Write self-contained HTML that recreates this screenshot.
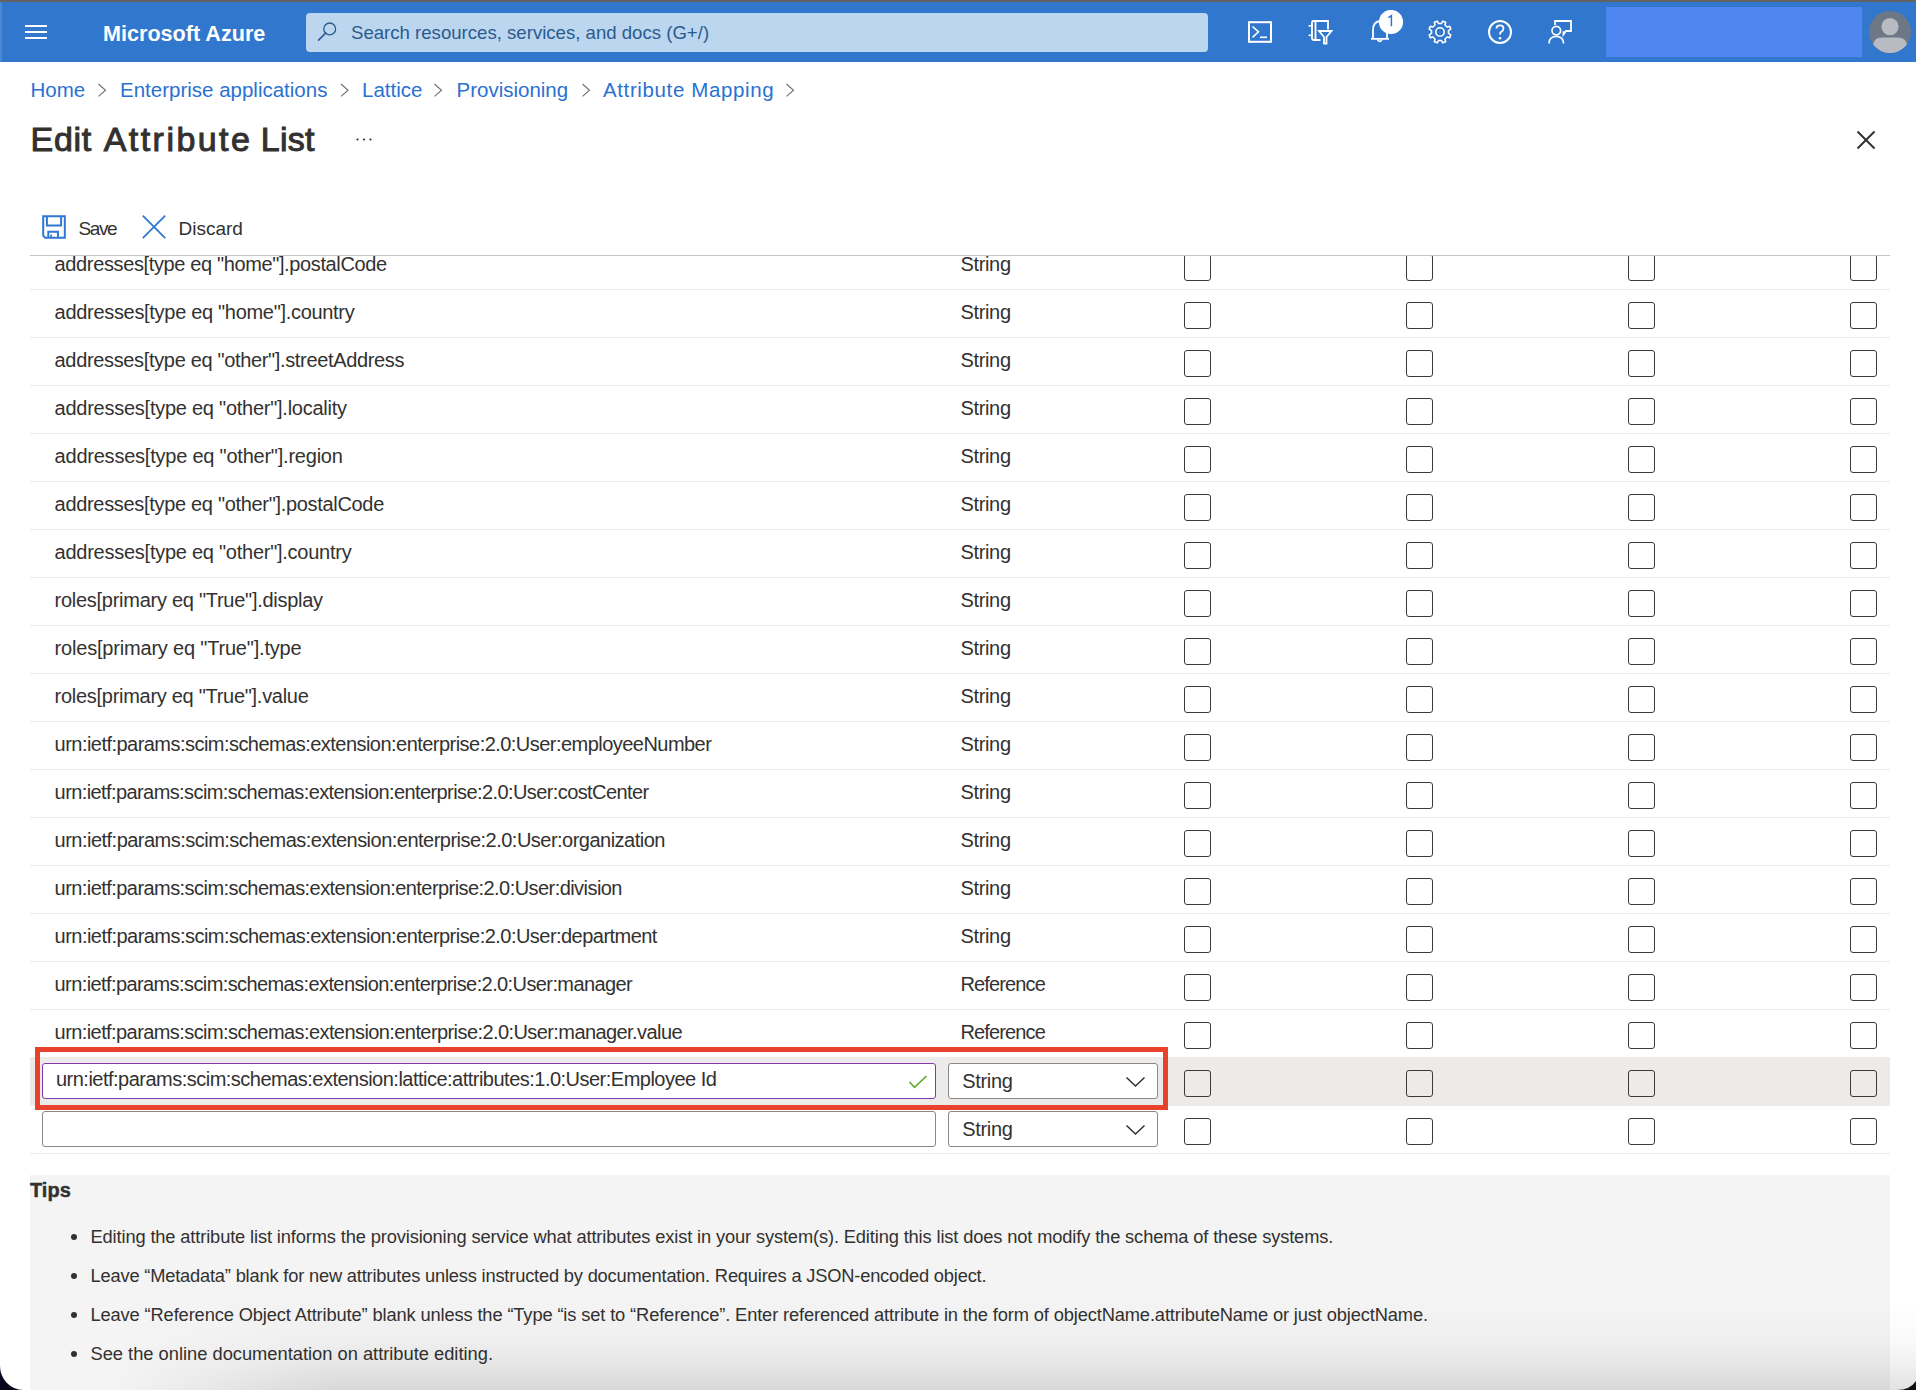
<!DOCTYPE html>
<html><head><meta charset="utf-8">
<style>
*{box-sizing:border-box;margin:0;padding:0}
html,body{width:1916px;height:1390px;overflow:hidden;background:#fff;font-family:"Liberation Sans",sans-serif;color:#323130}
.abs{position:absolute}
#strip{left:0;top:0;width:1916px;height:2px;background:#626262}
#hdr{left:0;top:2px;width:1916px;height:60px;background:#3277ce}
#hdrl{left:0;top:2px;width:2px;height:60px;background:#4b86d2}
.ham{left:25px;width:22px;height:1.6px;background:#fff}
#brand{left:103px;top:19.8px;font-size:21.6px;font-weight:bold;color:#fff;white-space:nowrap;line-height:28px}
#search{left:306px;top:13px;width:902px;height:39px;background:#bcd6ef;border-radius:4px}
#stext{left:351px;top:19.8px;font-size:18.6px;color:#2b5a8f;white-space:nowrap;line-height:26px}
#redact{left:1606px;top:7px;width:256px;height:50px;background:#4f86f0}
.bc{top:78px;font-size:20.5px;color:#2b71d1;white-space:nowrap;line-height:24px}
.chev{top:83px}
.ttl{top:118.2px;font-size:34px;font-weight:normal;-webkit-text-stroke:1px #323130;white-space:nowrap;line-height:42px;color:#323130}
.tb{top:219px;font-size:19px;white-space:nowrap;line-height:20px;color:#323130}
#scroll{left:0;top:256px;width:1916px;height:898px;overflow:hidden}
#topb{left:30px;top:255px;width:1860px;height:1px;background:#c8c6c4}
.row{position:absolute;left:30px;width:1860px;height:48px;border-bottom:1px solid #edebe9}
.row .n{position:absolute;left:24.6px;top:11.6px;font-size:20px;white-space:nowrap;line-height:20px}
.row .t{position:absolute;left:930.4px;top:11.6px;font-size:20px;white-space:nowrap;line-height:20px}
.cb{position:absolute;top:12px;width:27px;height:27px;border:1.4px solid #3b3a39;border-radius:3px}
.c1{left:1154px}.c2{left:1376px}.c3{left:1598px}.c4{left:1820px}
.inp{position:absolute;left:12.4px;top:5px;width:893.4px;height:36px;border:1px solid #8a8886;border-radius:3px;background:#fff}
.dd{position:absolute;left:918.2px;top:5px;width:209.5px;height:36px;border:1px solid #8a8886;border-radius:3px;background:#fff}
.dd span{position:absolute;left:13px;top:6.6px;font-size:20px;line-height:20px}
.dd svg{position:absolute;left:176px;top:12px}
.it{position:absolute;left:12.6px;top:5.2px;font-size:20px;line-height:20px;white-space:nowrap}
.chk{position:absolute;left:865px;top:10.5px}
#redbox{left:35px;top:1047px;width:1133px;height:63px;border:5px solid #e8412c}
#tips{left:30px;top:1175px;width:1860px;height:215px;background:#f4f4f4}
#tipsh{left:30px;top:1179.3px;font-size:20px;font-weight:bold;line-height:22px;-webkit-text-stroke:0.4px #323130}
.li{left:90.5px;font-size:18.3px;white-space:nowrap;line-height:20px}
.dot{left:70.8px;width:6px;height:6px;border-radius:50%;background:#323130}
#shade{left:0;top:1300px;width:1916px;height:90px;background:linear-gradient(to bottom,rgba(0,0,0,0) 0%,rgba(0,0,0,0.02) 45%,rgba(0,0,0,0.06) 72%,rgba(0,0,0,0.115) 100%);-webkit-mask-image:linear-gradient(to right,transparent 110px,#000 340px);mask-image:linear-gradient(to right,transparent 110px,#000 340px)}
</style></head><body>
<div id="strip" class="abs"></div>
<div id="hdr" class="abs"></div>
<div id="hdrl" class="abs"></div>
<div class="abs ham" style="top:25.2px"></div>
<div class="abs ham" style="top:31.1px"></div>
<div class="abs ham" style="top:37.1px"></div>
<div id="brand" class="abs">Microsoft Azure</div>
<div id="search" class="abs"></div>
<svg class="abs" style="left:316px;top:21px" width="22" height="22" viewBox="0 0 22 22"><circle cx="13.7" cy="7.9" r="5.9" fill="none" stroke="#2b5a8f" stroke-width="1.3"/><line x1="9.6" y1="12.1" x2="2.6" y2="19.1" stroke="#2b5a8f" stroke-width="1.5" stroke-linecap="round"/></svg>
<div id="stext" class="abs">Search resources, services, and docs (G+/)</div>
<!-- header icons -->
<svg class="abs" style="left:1240px;top:10px" width="340" height="45" viewBox="1240 10 340 45">
 <g fill="none" stroke="#fff" stroke-width="2">
  <rect x="1249" y="22.2" width="22" height="19.6"/>
  <polyline points="1252.5,26.5 1258.5,31.8 1252.5,37.3" stroke-width="1.6"/>
  <line x1="1260" y1="37.3" x2="1267" y2="37.3" stroke-width="1.6"/>
  <path d="M1315.5 21 H1328 V29.5 M1320.5 40 H1315.5 M1315.5 21 V40 M1315.5 21 H1313.5 Q1312 21 1312 22.5 V38.5 Q1312 40 1313.5 40 H1315.5" stroke-width="1.8"/>
  <line x1="1308.5" y1="25.8" x2="1313" y2="25.8" stroke-width="1.6"/>
  <line x1="1308.5" y1="35.3" x2="1313" y2="35.3" stroke-width="1.6"/>
  <path d="M1319 31 H1331.5 L1326.5 37 V43.5 H1324 V37 Z" stroke-width="1.8"/>
  <path d="M1373 38 V30 Q1373 22 1380 21 M1387 33 V38 M1371 38.9 H1389" stroke-width="1.8"/>
  <path d="M1377.5 39.5 Q1379.8 43.5 1382 39.5" stroke-width="1.6"/>
  <circle cx="1500" cy="32" r="11" stroke-width="2"/>
  <path d="M1496.5 28.5 Q1496.5 25.3 1500 25.3 Q1503.5 25.3 1503.5 28.5 Q1503.5 30.5 1501 32 Q1500 32.8 1500 34.5" stroke-width="1.8"/>
  <path d="M1555 25 V21 H1571 V31 H1566 L1563.5 34.5 V31.2" stroke-width="1.8"/>
  <circle cx="1556.3" cy="30.6" r="4.3" stroke-width="1.7"/>
  <path d="M1549 43.5 Q1549 36.5 1556.3 36.5 Q1563.5 36.5 1563.5 43.5" stroke-width="1.7"/>
 </g>
 <circle cx="1500" cy="38.3" r="1.3" fill="#fff"/>
 <circle cx="1391" cy="22" r="12.1" fill="#fff"/>
 <path d="M1388.4 17.6 L1391.4 15.6 V26.2" fill="none" stroke="#3277ce" stroke-width="1.5"/>
 <g transform="translate(1440 32)">
  <path id="gear" fill="none" stroke="#fff" stroke-width="1.6" stroke-linejoin="round" d="M1.35 -8.49 L2.87 -10.83 L5.63 -9.68 L5.05 -6.96 L6.96 -5.05 L9.68 -5.63 L10.83 -2.87 L8.49 -1.35 L8.49 1.35 L10.83 2.87 L9.68 5.63 L6.96 5.05 L5.05 6.96 L5.63 9.68 L2.87 10.83 L1.35 8.49 L-1.35 8.49 L-2.87 10.83 L-5.63 9.68 L-5.05 6.96 L-6.96 5.05 L-9.68 5.63 L-10.83 2.87 L-8.49 1.35 L-8.49 -1.35 L-10.83 -2.87 L-9.68 -5.63 L-6.96 -5.05 L-5.05 -6.96 L-5.63 -9.68 L-2.87 -10.83 L-1.35 -8.49 Z"/>
  <circle r="4.2" fill="none" stroke="#fff" stroke-width="1.6"/>
 </g>
</svg>
<div id="redact" class="abs"></div>
<svg class="abs" style="left:1869px;top:11px" width="42" height="42" viewBox="0 0 42 42">
 <defs><clipPath id="av"><circle cx="21" cy="21" r="21"/></clipPath></defs>
 <circle cx="21" cy="21" r="21" fill="#6d7786"/>
 <g clip-path="url(#av)" fill="#b8bbc1">
  <circle cx="21" cy="15.6" r="8.6"/>
  <path d="M4 42 V36 Q4 26.6 13 26.6 H29 Q38 26.6 38 36 V42 Z"/>
 </g>
</svg>
<!-- breadcrumb -->
<div class="abs bc" style="left:30.5px">Home</div>
<div class="abs bc" style="left:120px">Enterprise applications</div>
<div class="abs bc" style="left:362px">Lattice</div>
<div class="abs bc" style="left:456.5px">Provisioning</div>
<div class="abs bc" style="left:603px;letter-spacing:0.62px">Attribute Mapping</div>
<svg class="abs" style="left:0;top:80px" width="820" height="20" viewBox="0 80 820 20"><g fill="none" stroke="#767472" stroke-width="1.2"><polyline points="98.5,84 105.5,90.2 98.5,96.4"/><polyline points="341,84 348,90.2 341,96.4"/><polyline points="434.5,84 441.5,90.2 434.5,96.4"/><polyline points="582.5,84 589.5,90.2 582.5,96.4"/><polyline points="786.5,84 793.5,90.2 786.5,96.4"/></g></svg>
<div id="t1" class="abs ttl" style="left:30.50px;letter-spacing:0.733px">Edit</div><div id="t2" class="abs ttl" style="left:103.70px;letter-spacing:2.450px">Attribute</div><div id="t3" class="abs ttl" style="left:260.80px;letter-spacing:0.267px">List</div>
<svg class="abs" style="left:350px;top:130px" width="30" height="20"><g fill="#323130"><circle cx="7.5" cy="9.5" r="1.1"/><circle cx="14" cy="9.5" r="1.1"/><circle cx="20.5" cy="9.5" r="1.1"/></g></svg>
<svg class="abs" style="left:1850px;top:124px" width="32" height="32" viewBox="0 0 32 32"><g stroke="#323130" stroke-width="1.9"><line x1="7.5" y1="7.5" x2="24.5" y2="24.5"/><line x1="24.5" y1="7.5" x2="7.5" y2="24.5"/></g></svg>
<!-- toolbar -->
<svg class="abs" style="left:40px;top:213px" width="130" height="28" viewBox="40 213 130 28">
 <g fill="none" stroke="#2f78d4" stroke-width="2">
  <path d="M43.2 216.2 H64.8 V237.7 H45.2 L43.2 235.7 Z"/>
  <path d="M46.9 216.2 V225.4 H61.1 V216.2"/>
  <path d="M48.3 237.7 V231.7 H58 V237.7"/>
  <path d="M51.1 237.7 V234.5" stroke-width="1.6"/>
 </g>
 <g stroke="#2f78d4" stroke-width="1.8"><line x1="142.8" y1="215.7" x2="165.2" y2="238.2"/><line x1="165.2" y1="215.7" x2="142.8" y2="238.2"/></g>
</svg>
<div class="abs tb" style="left:78.5px;letter-spacing:-1.4px">Save</div>
<div class="abs tb" style="left:178.5px">Discard</div>
<div id="topb" class="abs"></div>
<div id="scroll" class="abs">
 <div id="rows" class="abs" style="left:0;top:0;width:1916px;height:898px"><!--ROWS-->
<div class="row" style="top:-14px"><div class="n" style="letter-spacing:-0.371px">addresses[type eq &quot;home&quot;].postalCode</div><div class="t" style="letter-spacing:-0.320px">String</div><div class="cb c1"></div><div class="cb c2"></div><div class="cb c3"></div><div class="cb c4"></div></div>
<div class="row" style="top:34px"><div class="n" style="letter-spacing:-0.306px">addresses[type eq &quot;home&quot;].country</div><div class="t" style="letter-spacing:-0.320px">String</div><div class="cb c1"></div><div class="cb c2"></div><div class="cb c3"></div><div class="cb c4"></div></div>
<div class="row" style="top:82px"><div class="n" style="letter-spacing:-0.344px">addresses[type eq &quot;other&quot;].streetAddress</div><div class="t" style="letter-spacing:-0.320px">String</div><div class="cb c1"></div><div class="cb c2"></div><div class="cb c3"></div><div class="cb c4"></div></div>
<div class="row" style="top:130px"><div class="n" style="letter-spacing:-0.253px">addresses[type eq &quot;other&quot;].locality</div><div class="t" style="letter-spacing:-0.320px">String</div><div class="cb c1"></div><div class="cb c2"></div><div class="cb c3"></div><div class="cb c4"></div></div>
<div class="row" style="top:178px"><div class="n" style="letter-spacing:-0.225px">addresses[type eq &quot;other&quot;].region</div><div class="t" style="letter-spacing:-0.320px">String</div><div class="cb c1"></div><div class="cb c2"></div><div class="cb c3"></div><div class="cb c4"></div></div>
<div class="row" style="top:226px"><div class="n" style="letter-spacing:-0.317px">addresses[type eq &quot;other&quot;].postalCode</div><div class="t" style="letter-spacing:-0.320px">String</div><div class="cb c1"></div><div class="cb c2"></div><div class="cb c3"></div><div class="cb c4"></div></div>
<div class="row" style="top:274px"><div class="n" style="letter-spacing:-0.255px">addresses[type eq &quot;other&quot;].country</div><div class="t" style="letter-spacing:-0.320px">String</div><div class="cb c1"></div><div class="cb c2"></div><div class="cb c3"></div><div class="cb c4"></div></div>
<div class="row" style="top:322px"><div class="n" style="letter-spacing:-0.271px">roles[primary eq &quot;True&quot;].display</div><div class="t" style="letter-spacing:-0.320px">String</div><div class="cb c1"></div><div class="cb c2"></div><div class="cb c3"></div><div class="cb c4"></div></div>
<div class="row" style="top:370px"><div class="n" style="letter-spacing:-0.193px">roles[primary eq &quot;True&quot;].type</div><div class="t" style="letter-spacing:-0.320px">String</div><div class="cb c1"></div><div class="cb c2"></div><div class="cb c3"></div><div class="cb c4"></div></div>
<div class="row" style="top:418px"><div class="n" style="letter-spacing:-0.283px">roles[primary eq &quot;True&quot;].value</div><div class="t" style="letter-spacing:-0.320px">String</div><div class="cb c1"></div><div class="cb c2"></div><div class="cb c3"></div><div class="cb c4"></div></div>
<div class="row" style="top:466px"><div class="n" style="letter-spacing:-0.536px">urn:ietf:params:scim:schemas:extension:enterprise:2.0:User:employeeNumber</div><div class="t" style="letter-spacing:-0.320px">String</div><div class="cb c1"></div><div class="cb c2"></div><div class="cb c3"></div><div class="cb c4"></div></div>
<div class="row" style="top:514px"><div class="n" style="letter-spacing:-0.591px">urn:ietf:params:scim:schemas:extension:enterprise:2.0:User:costCenter</div><div class="t" style="letter-spacing:-0.320px">String</div><div class="cb c1"></div><div class="cb c2"></div><div class="cb c3"></div><div class="cb c4"></div></div>
<div class="row" style="top:562px"><div class="n" style="letter-spacing:-0.517px">urn:ietf:params:scim:schemas:extension:enterprise:2.0:User:organization</div><div class="t" style="letter-spacing:-0.320px">String</div><div class="cb c1"></div><div class="cb c2"></div><div class="cb c3"></div><div class="cb c4"></div></div>
<div class="row" style="top:610px"><div class="n" style="letter-spacing:-0.558px">urn:ietf:params:scim:schemas:extension:enterprise:2.0:User:division</div><div class="t" style="letter-spacing:-0.320px">String</div><div class="cb c1"></div><div class="cb c2"></div><div class="cb c3"></div><div class="cb c4"></div></div>
<div class="row" style="top:658px"><div class="n" style="letter-spacing:-0.535px">urn:ietf:params:scim:schemas:extension:enterprise:2.0:User:department</div><div class="t" style="letter-spacing:-0.320px">String</div><div class="cb c1"></div><div class="cb c2"></div><div class="cb c3"></div><div class="cb c4"></div></div>
<div class="row" style="top:706px"><div class="n" style="letter-spacing:-0.597px">urn:ietf:params:scim:schemas:extension:enterprise:2.0:User:manager</div><div class="t" style="letter-spacing:-0.860px">Reference</div><div class="cb c1"></div><div class="cb c2"></div><div class="cb c3"></div><div class="cb c4"></div></div>
<div class="row" style="top:754px"><div class="n" style="letter-spacing:-0.581px">urn:ietf:params:scim:schemas:extension:enterprise:2.0:User:manager.value</div><div class="t" style="letter-spacing:-0.860px">Reference</div><div class="cb c1"></div><div class="cb c2"></div><div class="cb c3"></div><div class="cb c4"></div></div>
<div class="row" style="top:802px;background:#edebe9"><div class="inp" style="border-color:#8239ad"><span class="it" style="letter-spacing:-0.512px">urn:ietf:params:scim:schemas:extension:lattice:attributes:1.0:User:Employee Id</span><svg class="chk" width="20" height="14" viewBox="0 0 20 14"><polyline points="1.5,7 6.5,12.3 18.5,1" fill="none" stroke="#5ea72b" stroke-width="1.6"/></svg></div><div class="dd"><span style="letter-spacing:-0.320px">String</span><svg width="22" height="12" viewBox="0 0 22 12"><polyline points="1.5,1.5 10.5,10 19.5,1.5" fill="none" stroke="#323130" stroke-width="1.5"/></svg></div><div class="cb c1"></div><div class="cb c2"></div><div class="cb c3"></div><div class="cb c4"></div></div>
<div class="row" style="top:850px"><div class="inp"></div><div class="dd"><span style="letter-spacing:-0.320px">String</span><svg width="22" height="12" viewBox="0 0 22 12"><polyline points="1.5,1.5 10.5,10 19.5,1.5" fill="none" stroke="#323130" stroke-width="1.5"/></svg></div><div class="cb c1"></div><div class="cb c2"></div><div class="cb c3"></div><div class="cb c4"></div></div>
<!--/ROWS--></div>
</div>
<div id="redbox" class="abs"></div>
<div id="tips" class="abs"></div>
<div id="tipsh" class="abs">Tips</div>
<div class="abs dot" style="top:1233.5px"></div>
<div class="abs li" style="top:1227px;letter-spacing:-0.137px">Editing the attribute list informs the provisioning service what attributes exist in your system(s). Editing this list does not modify the schema of these systems.</div>
<div class="abs dot" style="top:1272.5px"></div>
<div class="abs li" style="top:1266px;letter-spacing:-0.19px">Leave “Metadata” blank for new attributes unless instructed by documentation. Requires a JSON-encoded object.</div>
<div class="abs dot" style="top:1311.5px"></div>
<div class="abs li" style="top:1305px;letter-spacing:-0.132px">Leave “Reference Object Attribute” blank unless the “Type “is set to “Reference”. Enter referenced attribute in the form of objectName.attributeName or just objectName.</div>
<div class="abs dot" style="top:1350.5px"></div>
<div class="abs li" style="top:1344px">See the online documentation on attribute editing.</div>
<div id="shade" class="abs"></div>
<svg class="abs" style="left:0;top:1340px" width="60" height="50" viewBox="0 1340 60 50"><path d="M0 1366 A24 24 0 0 0 23 1390 L0 1390 Z" fill="#0b0620"/></svg>
<svg class="abs" style="left:1860px;top:1340px" width="56" height="50" viewBox="1860 1340 56 50"><path d="M1916 1381 Q1910 1390 1897 1390 L1916 1390 Z" fill="#101114"/></svg>
</body></html>
